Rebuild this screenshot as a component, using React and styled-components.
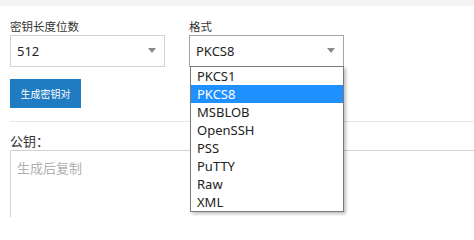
import React from 'react';
import styled, { createGlobalStyle } from 'styled-components';

const GlobalStyle = createGlobalStyle`
  body {
    margin: 0;
    background: #fff;
    font-family: "Noto Sans", "Noto Sans CJK SC", sans-serif;
    color: #333;
  }
`;

const Page = styled.div`
  height: 217px;
  overflow: hidden;
`;

const TopBand = styled.div`
  height: 6px;
  background: #f4f4f4;
`;

const Main = styled.div`
  padding: 11px 0 0 10px;
`;

const FieldRow = styled.div`
  display: grid;
  grid-template-columns: 155px 155px;
  column-gap: 24px;
`;

const Field = styled.div`
  position: relative;
  display: flex;
  flex-direction: column;
`;

const Label = styled.div`
  font-family: "Noto Sans CJK SC", sans-serif;
  font-size: ${p => p.size || 11.5}px;
  line-height: 18px;
  color: #333;
`;

const SelectBox = styled.div`
  height: 30px;
  border: 1px solid ${p => (p.open ? '#a6a6a6' : '#d2d2d2')};
  display: flex;
  align-items: center;
  justify-content: space-between;
  padding: 0 8px 0 6px;
  font-size: 13px;
  color: #222;
`;

const Arrow = styled.span`
  width: 0;
  height: 0;
  border-left: 4px solid transparent;
  border-right: 4px solid transparent;
  border-top: 5px solid #8a8a8a;
  margin-top: -2px;
`;

const Dropdown = styled.ul`
  position: absolute;
  top: 49px;
  left: 1px;
  width: 152px;
  margin: 0;
  padding: 0;
  list-style: none;
  background: #fff;
  border: 1px solid #7a7a7a;
  box-shadow: 2px 2px 3px rgba(0, 0, 0, 0.25);
  z-index: 2;
`;

const Option = styled.li`
  height: 18px;
  line-height: 18px;
  padding-left: 6px;
  font-size: 13px;
  color: ${p => (p.active ? '#fff' : '#222')};
  background: ${p => (p.active ? '#1e90ff' : 'transparent')};
`;

const Button = styled.button`
  margin-top: 12px;
  width: 71px;
  height: 29px;
  border: none;
  background: #1f7bc2;
  color: #fff;
  font-family: "Noto Sans CJK SC", sans-serif;
  font-size: 10px;
  padding: 0;
`;

const Divider = styled.div`
  margin-top: 13px;
  height: 1px;
  background: #e6e6e6;
`;

const KeyLabel = styled(Label)`
  margin-top: 10px;
`;

const TextArea = styled.div`
  height: 80px;
  border: 1px solid #d2d2d2;
  border-right: none;
  padding: 7px 6px;
  font-family: "Noto Sans CJK SC", sans-serif;
  font-size: 13px;
  color: #b0b0b0;
`;

const formats = ['PKCS1', 'PKCS8', 'MSBLOB', 'OpenSSH', 'PSS', 'PuTTY', 'Raw', 'XML'];

const App = () => {
  return (
    <Page>
      <GlobalStyle />
      <TopBand />
      <Main>
        <FieldRow>
          <Field>
            <Label>密钥长度位数</Label>
            <SelectBox>
              <span>512</span>
              <Arrow />
            </SelectBox>
          </Field>
          <Field>
            <Label>格式</Label>
            <SelectBox open>
              <span>PKCS8</span>
              <Arrow />
            </SelectBox>
            <Dropdown>
              {formats.map(f => (
                <Option key={f} active={f === 'PKCS8'}>{f}</Option>
              ))}
            </Dropdown>
          </Field>
        </FieldRow>
        <Button>生成密钥对</Button>
        <Divider />
        <KeyLabel size={13}>公钥：</KeyLabel>
        <TextArea>生成后复制</TextArea>
      </Main>
    </Page>
  );
};

export default App;
